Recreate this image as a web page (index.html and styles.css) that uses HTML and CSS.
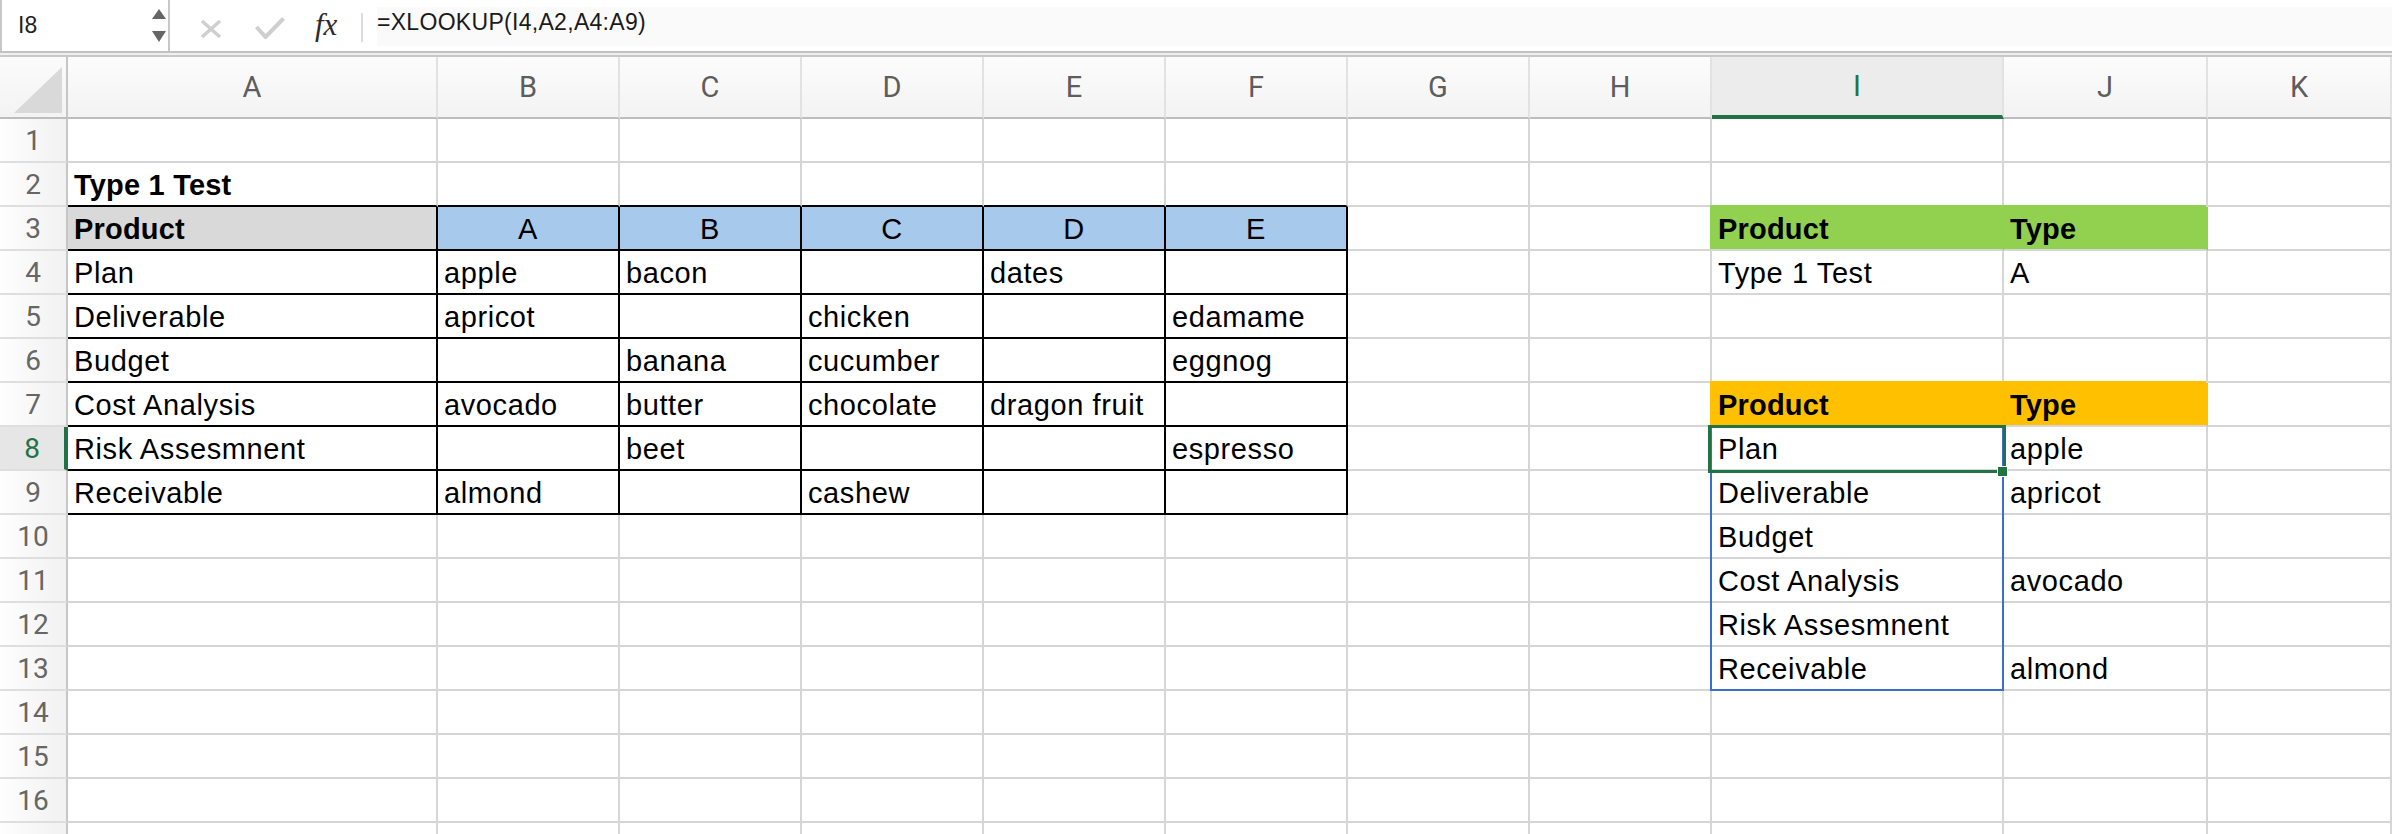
FILE: index.html
```html
<!DOCTYPE html>
<html>
<head>
<meta charset="utf-8">
<link rel="stylesheet" href="styles.css">
</head>
<body>
<div class="fbar">
  <div class="namebox">
    <span class="nb-text">I8</span>
    <svg class="stepper" width="16" height="35" viewBox="0 0 16 35"><polygon points="1,11 15,11 8,1" fill="#666"/><polygon points="1,23 15,23 8,34" fill="#666"/></svg>
  </div>
  <svg class="ic-x" width="22" height="20" viewBox="0 0 22 20"><path d="M2 2 L20 18 M20 2 L2 18" stroke="#cfcfcf" stroke-width="3.5" fill="none"/></svg>
  <svg class="ic-check" width="30" height="22" viewBox="0 0 30 22"><path d="M1.5 10 L10.5 20 L28.5 1.5" stroke="#cfcfcf" stroke-width="4" fill="none"/></svg>
  <span class="fx">fx</span>
  <div class="fb-sep"></div>
  <div class="fb-input">=XLOOKUP(I4,A2,A4:A9)</div>
</div>
<div class="divider"></div>
<div class="sheet">
  <div class="corner"><svg width="66" height="60" viewBox="0 0 66 60"><polygon points="14,56 62,10 62,56" fill="#d9d9d9"/></svg></div>
  <div class="ch">A</div><div class="ch">B</div><div class="ch">C</div><div class="ch">D</div><div class="ch">E</div><div class="ch">F</div><div class="ch">G</div><div class="ch">H</div><div class="ch ch-sel">I</div><div class="ch">J</div><div class="ch">K</div>

  <div class="rh">1</div>
  <div class="c"></div><div class="c"></div><div class="c"></div><div class="c"></div><div class="c"></div><div class="c"></div><div class="c"></div><div class="c"></div><div class="c"></div><div class="c"></div><div class="c"></div>

  <div class="rh">2</div>
  <div class="c tt b">Type 1 Test</div><div class="c tt"></div><div class="c tt"></div><div class="c tt"></div><div class="c tt"></div><div class="c tt"></div><div class="c"></div><div class="c"></div><div class="c"></div><div class="c"></div><div class="c"></div>

  <div class="rh">3</div>
  <div class="c t b f-gray">Product</div><div class="c t ctr f-blue">A</div><div class="c t ctr f-blue">B</div><div class="c t ctr f-blue">C</div><div class="c t ctr f-blue">D</div><div class="c t ctr f-blue">E</div><div class="c"></div><div class="c"></div><div class="c b f-green">Product</div><div class="c b f-green">Type</div><div class="c"></div>

  <div class="rh">4</div>
  <div class="c t">Plan</div><div class="c t">apple</div><div class="c t">bacon</div><div class="c t"></div><div class="c t">dates</div><div class="c t"></div><div class="c"></div><div class="c"></div><div class="c">Type 1 Test</div><div class="c">A</div><div class="c"></div>

  <div class="rh">5</div>
  <div class="c t">Deliverable</div><div class="c t">apricot</div><div class="c t"></div><div class="c t">chicken</div><div class="c t"></div><div class="c t">edamame</div><div class="c"></div><div class="c"></div><div class="c"></div><div class="c"></div><div class="c"></div>

  <div class="rh">6</div>
  <div class="c t">Budget</div><div class="c t"></div><div class="c t">banana</div><div class="c t">cucumber</div><div class="c t"></div><div class="c t">eggnog</div><div class="c"></div><div class="c"></div><div class="c"></div><div class="c"></div><div class="c"></div>

  <div class="rh">7</div>
  <div class="c t">Cost Analysis</div><div class="c t">avocado</div><div class="c t">butter</div><div class="c t">chocolate</div><div class="c t">dragon fruit</div><div class="c t"></div><div class="c"></div><div class="c"></div><div class="c b f-orange">Product</div><div class="c b f-orange">Type</div><div class="c"></div>

  <div class="rh rh-sel">8</div>
  <div class="c t">Risk Assesmnent</div><div class="c t"></div><div class="c t">beet</div><div class="c t"></div><div class="c t"></div><div class="c t">espresso</div><div class="c"></div><div class="c"></div><div class="c">Plan</div><div class="c">apple</div><div class="c"></div>

  <div class="rh">9</div>
  <div class="c t">Receivable</div><div class="c t">almond</div><div class="c t"></div><div class="c t">cashew</div><div class="c t"></div><div class="c t"></div><div class="c"></div><div class="c"></div><div class="c">Deliverable</div><div class="c">apricot</div><div class="c"></div>

  <div class="rh">10</div>
  <div class="c"></div><div class="c"></div><div class="c"></div><div class="c"></div><div class="c"></div><div class="c"></div><div class="c"></div><div class="c"></div><div class="c">Budget</div><div class="c"></div><div class="c"></div>

  <div class="rh">11</div>
  <div class="c"></div><div class="c"></div><div class="c"></div><div class="c"></div><div class="c"></div><div class="c"></div><div class="c"></div><div class="c"></div><div class="c">Cost Analysis</div><div class="c">avocado</div><div class="c"></div>

  <div class="rh">12</div>
  <div class="c"></div><div class="c"></div><div class="c"></div><div class="c"></div><div class="c"></div><div class="c"></div><div class="c"></div><div class="c"></div><div class="c">Risk Assesmnent</div><div class="c"></div><div class="c"></div>

  <div class="rh">13</div>
  <div class="c"></div><div class="c"></div><div class="c"></div><div class="c"></div><div class="c"></div><div class="c"></div><div class="c"></div><div class="c"></div><div class="c">Receivable</div><div class="c">almond</div><div class="c"></div>

  <div class="rh">14</div>
  <div class="c"></div><div class="c"></div><div class="c"></div><div class="c"></div><div class="c"></div><div class="c"></div><div class="c"></div><div class="c"></div><div class="c"></div><div class="c"></div><div class="c"></div>

  <div class="rh">15</div>
  <div class="c"></div><div class="c"></div><div class="c"></div><div class="c"></div><div class="c"></div><div class="c"></div><div class="c"></div><div class="c"></div><div class="c"></div><div class="c"></div><div class="c"></div>

  <div class="rh">16</div>
  <div class="c"></div><div class="c"></div><div class="c"></div><div class="c"></div><div class="c"></div><div class="c"></div><div class="c"></div><div class="c"></div><div class="c"></div><div class="c"></div><div class="c"></div>

  <div class="rh">17</div>
  <div class="c"></div><div class="c"></div><div class="c"></div><div class="c"></div><div class="c"></div><div class="c"></div><div class="c"></div><div class="c"></div><div class="c"></div><div class="c"></div><div class="c"></div>

  <div class="spill"></div>
  <div class="selection"></div>
  <div class="handle"></div>
</div>
</body>
</html>
```

FILE: styles.css
```css
html, body {
  margin: 0;
  padding: 0;
}
body {
  width: 2392px;
  height: 834px;
  overflow: hidden;
  background: #ffffff;
  font-family: "Liberation Sans", Arial, sans-serif;
  color: #000;
}

/* Formula bar */
.fbar {
  display: flex;
  align-items: flex-start;
  height: 51px;
  background: #ffffff;
}
.namebox {
  box-sizing: border-box;
  width: 170px;
  height: 51px;
  border-left: 2px solid #c8c8c8;
  border-right: 2px solid #c8c8c8;
  display: flex;
  align-items: flex-start;
  background: #fff;
}
.nb-text {
  font-size: 23px;
  line-height: 50px;
  color: #1f1f1f;
  padding-left: 16px;
}
.stepper {
  margin-left: auto;
  margin-right: 1px;
  margin-top: 8px;
}
.ic-x {
  margin-left: 30px;
  margin-top: 19px;
}
.ic-check {
  margin-left: 33px;
  margin-top: 17px;
}
.fx {
  display: inline-block;
  width: 31px;
  margin-left: 30px;
  margin-top: 10px;
  font-family: "Liberation Serif", "Times New Roman", serif;
  font-style: italic;
  font-size: 31px;
  line-height: 30px;
  color: #2b2b2b;
}
.fb-sep {
  margin-left: 15px;
  margin-top: 13px;
  width: 2px;
  height: 29px;
  background: #dcdcdc;
}
.fb-input {
  flex: 1;
  margin-left: 14px;
  margin-top: 7px;
  height: 39px;
  background: #fafafa;
  font-size: 23px;
  letter-spacing: 0.3px;
  line-height: 30px;
  color: #1a1a1a;
  white-space: nowrap;
}
.divider {
  height: 2px;
  border-top: 2px solid #c2c2c2;
  border-bottom: 2px solid #c8c8c8;
  background: #efefef;
}

/* Sheet grid */
.sheet {
  position: relative;
  display: grid;
  grid-template-columns: 68px 370px repeat(7, 182px) 292px 204px 1fr;
  grid-template-rows: 62px;
  grid-auto-rows: 44px;
}
.corner {
  border-right: 2px solid #c6c6c6;
  border-bottom: 2px solid #bdbdbd;
  background: linear-gradient(#fbfbfb, #f3f3f3);
  overflow: hidden;
}
.corner svg {
  display: block;
}
.ch {
  border-right: 2px solid #e2e2e2;
  border-bottom: 2px solid #bdbdbd;
  background: linear-gradient(#fcfcfc, #f3f3f3);
  display: flex;
  align-items: center;
  justify-content: center;
  font-family: Roboto, "Liberation Sans", sans-serif;
  font-size: 29px;
  color: #5d5d5d;
}
.ch-sel {
  background: #ececec;
  border-bottom: 4px solid #217346;
  color: #217346;
}
.rh {
  border-right: 2px solid #c6c6c6;
  border-bottom: 2px solid #dedede;
  background: linear-gradient(to right, #fefefe, #f1f1f1);
  display: flex;
  align-items: center;
  justify-content: center;
  font-family: Roboto, "Liberation Sans", sans-serif;
  font-size: 28px;
  color: #666666;
}
.rh-sel {
  background: #e6e6e6;
  border-right: 4px solid #217346;
  color: #217346;
}
.c {
  border-right: 2px solid #d6d6d6;
  border-bottom: 2px solid #d6d6d6;
  padding: 2px 0 0 6px;
  line-height: 40px;
  font-size: 29px;
  letter-spacing: 0.6px;
  white-space: nowrap;
  color: #000;
}
.b {
  font-weight: bold;
  letter-spacing: 0.2px;
}
.ctr {
  text-align: center;
  padding-left: 0;
}
.tt {
  border-bottom-color: #000;
}
.t {
  border-right-color: #000;
  border-bottom-color: #000;
}
.f-gray {
  background: #d9d9d9;
}
.f-blue {
  background: #a6c9ec;
}
.f-green {
  background: #92d050;
  border-right-color: #92d050;
  box-shadow: -2px -2px 0 0 #92d050;
}
.f-orange {
  background: #ffc000;
  border-right-color: #ffc000;
  box-shadow: -2px -2px 0 0 #ffc000;
}

/* Overlays: spill range and active cell */
.spill {
  position: absolute;
  left: 1710px;
  top: 369px;
  width: 294px;
  height: 265px;
  box-sizing: border-box;
  border: 2px solid #3b6fce;
}
.selection {
  position: absolute;
  left: 1708px;
  top: 368px;
  width: 298px;
  height: 48px;
  box-sizing: border-box;
  border: 3px solid #217346;
}
.handle {
  position: absolute;
  left: 1997px;
  top: 409px;
  width: 11px;
  height: 11px;
  box-sizing: border-box;
  border: 1px solid #ffffff;
  background: #217346;
}
```
